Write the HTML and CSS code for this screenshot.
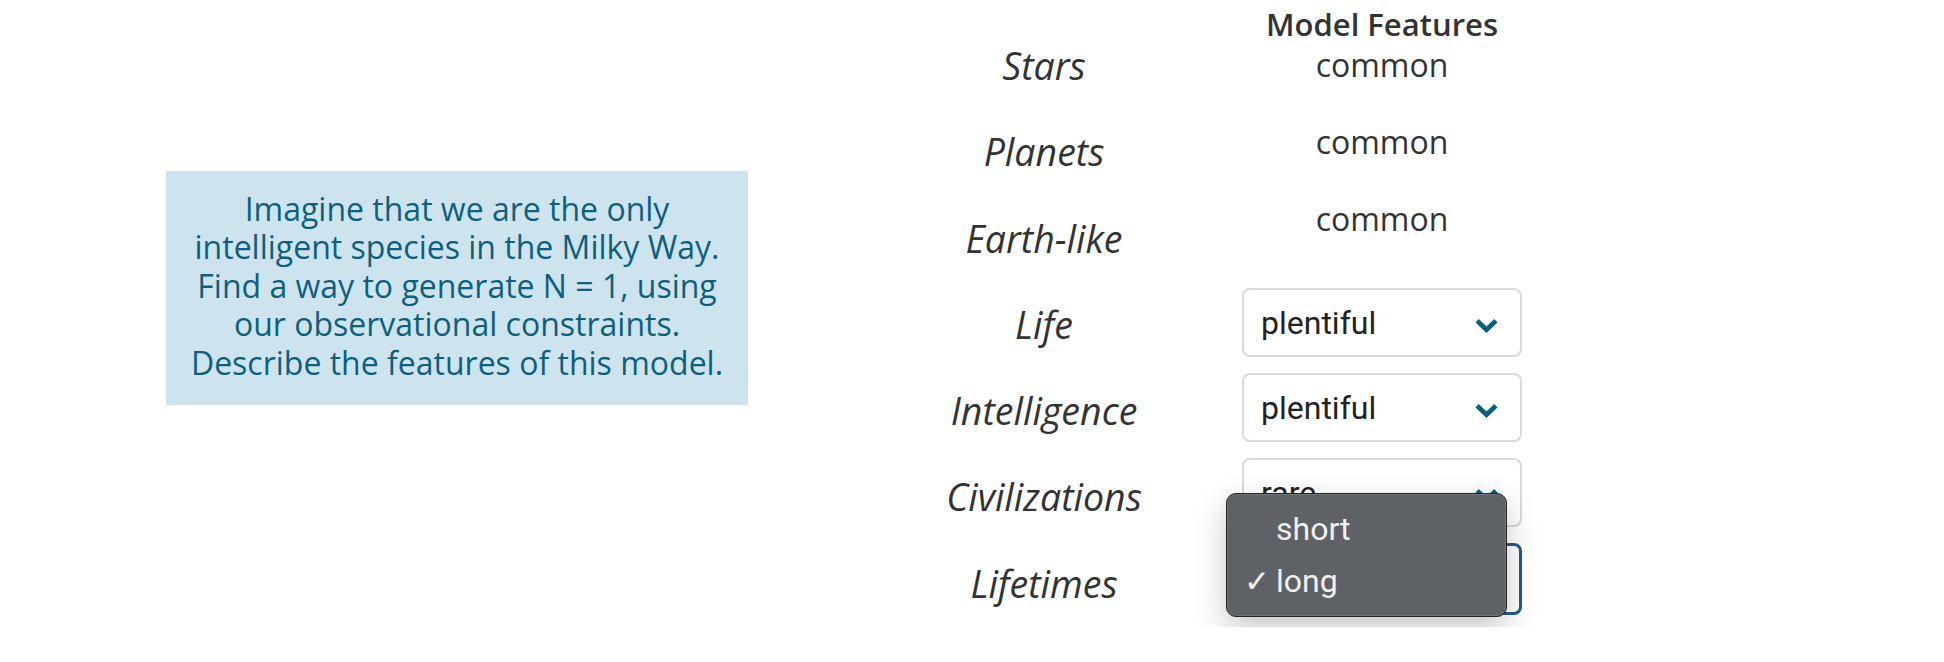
FILE: index.html
```html
<!DOCTYPE html>
<html lang="en">
<head>
	<meta charset="UTF-8">
	<title>Model Features</title>
	<link rel="stylesheet" href="styles.css">
</head>
<body>
	<div class="page">
		<div class="prompt">
			Imagine that we are the only intelligent species in the Milky Way.
			Find a way to generate N = 1, using our observational constraints.
			Describe the features of this model.
		</div>

		<div class="labels">
			<div class="label">Stars</div>
			<div class="label">Planets</div>
			<div class="label">Earth-like</div>
			<div class="label">Life</div>
			<div class="label">Intelligence</div>
			<div class="label">Civilizations</div>
			<div class="label">Lifetimes</div>
		</div>

		<div class="values">
			<h2 class="title">Model Features</h2>
			<div class="fixed">common</div>
			<div class="fixed">common</div>
			<div class="fixed">common</div>

			<div class="choices">
				<div class="select">
					<span>plentiful</span>
					<svg class="chev" viewBox="0 0 24 16"><path d="M3 3.5 L12 12 L21 3.5"/></svg>
				</div>
				<div class="select">
					<span>plentiful</span>
					<svg class="chev" viewBox="0 0 24 16"><path d="M3 3.5 L12 12 L21 3.5"/></svg>
				</div>
				<div class="select">
					<span>rare</span>
					<svg class="chev" viewBox="0 0 24 16"><path d="M3 3.5 L12 12 L21 3.5"/></svg>
				</div>
				<div class="select focus">
					<span>long</span>
					<svg class="chev" viewBox="0 0 24 16"><path d="M3 3.5 L12 12 L21 3.5"/></svg>

					<ul class="menu">
						<li><span class="check"></span>short</li>
						<li><span class="check">✓</span>long</li>
					</ul>
				</div>
			</div>
		</div>
	</div>
</body>
</html>
```

FILE: styles.css
```css
*{margin: 0;padding: 0;box-sizing: border-box;}
body{
	background: #fff;
	font-family: "Open Sans", "Liberation Sans", sans-serif;
	color: #333;
}
ul{list-style: none;}
.page{
	display: flex;
	align-items: flex-start;
	padding-left: 166px;
}
.prompt{
	width: 582px;
	margin-top: 171px;
	padding: 19px 22px 23px;
	background: #cde4ee;
	color: #0e5f7e;
	font-size: 32px;
	line-height: 38.4px;
	text-align: center;
}
.labels{
	width: 230px;
	margin-left: 181px;
	padding-top: 23px;
}
.label{
	height: 86.3px;
	font-size: 37.5px;
	line-height: 86.3px;
	font-style: italic;
	text-align: center;
	color: #333;
}
.values{
	width: 280px;
	margin-left: 83px;
	padding-top: 9px;
	text-align: center;
}
.title{
	font-size: 31px;
	font-weight: 600;
	line-height: 30px;
	margin-bottom: 5px;
	color: #333;
}
.fixed{
	font-size: 32px;
	line-height: 42px;
	margin-bottom: 35px;
}
.choices{
	margin-top: 48px;
	display: flex;
	flex-direction: column;
	gap: 16px;
}
.select{
	position: relative;
	display: flex;
	align-items: center;
	justify-content: space-between;
	height: 69px;
	padding: 0 21px 0 17px;
	background: #fff;
	border: 2px solid #d9d9de;
	border-radius: 8px;
	font-family: Roboto, "Liberation Sans", sans-serif;
	font-size: 32px;
	color: #222;
	text-align: left;
}
.chev{
	width: 25px;
	height: 17px;
	margin-top: 5px;
	fill: none;
	stroke: #0b5f7f;
	stroke-width: 4.6;
	stroke-linejoin: miter;
}
.select.focus{
	height: 72px;
	border: 3px solid #1f5c8d;
	padding-left: 16px;
}
.menu{
	position: absolute;
	top: -53px;
	left: -19px;
	width: 281px;
	height: 124px;
	padding-top: 9px;
	background: #5e6165;
	border: 1px solid #232425;
	border-radius: 10px;
	box-shadow: inset 0 0 0 1px rgba(255,255,255,.12), 0 12px 32px rgba(0,0,0,.22);
	color: #f1f1f1;
	font-size: 32px;
}
.menu li{
	display: flex;
	align-items: center;
	height: 52px;
	padding-left: 17px;
}
.check{
	width: 32px;
	font-size: 31px;
}
```
